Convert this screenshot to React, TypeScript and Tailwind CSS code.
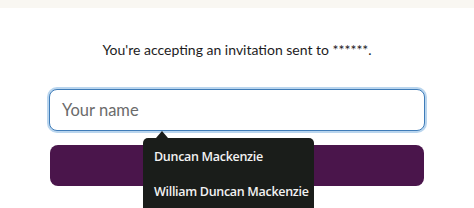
export default function App() {
  return (
    <div className="relative h-[208px] w-[474px] overflow-hidden bg-white" style={{ fontFamily: 'Lato, "Liberation Sans", sans-serif' }}>
      <div className="h-[8px] bg-[#f9f7f2]" />
      <p className="mt-[33px] text-center text-[14px] leading-[17px] text-[#1d1c1d]">
        You're accepting an invitation sent to ******.
      </p>
      <div className="mx-[47px] mt-[29px] rounded-[10px] bg-[#b9d5ee] p-[2px]">
        <div className="flex h-[42px] items-center rounded-[8px] border border-[#3f7cb8] bg-white px-[12px] text-[16.5px] text-[#6b6b6b]">
          Your name
        </div>
      </div>
      <div className="mx-[50px] mt-[12px] h-[41px] rounded-[8px] bg-[#4a154b]" />

      <div className="absolute left-[143px] top-[131px]" style={{ fontFamily: '"Open Sans", "Noto Sans", sans-serif' }}>
        <div className="ml-[13px] h-0 w-0 border-x-[6px] border-b-[7px] border-x-transparent border-b-[#1a1d1a]" />
        <div className="w-[171px] rounded-t-[5px] bg-[#1a1d1a] pt-[9px] pb-[10px] pl-[11px] text-[12.5px] font-semibold tracking-[-0.3px] whitespace-nowrap text-[#f2f2f2]">
          <div className="h-[35px] leading-[20px]">Duncan Mackenzie</div>
          <div className="leading-[20px]">William Duncan Mackenzie</div>
        </div>
      </div>
    </div>
  );
}
